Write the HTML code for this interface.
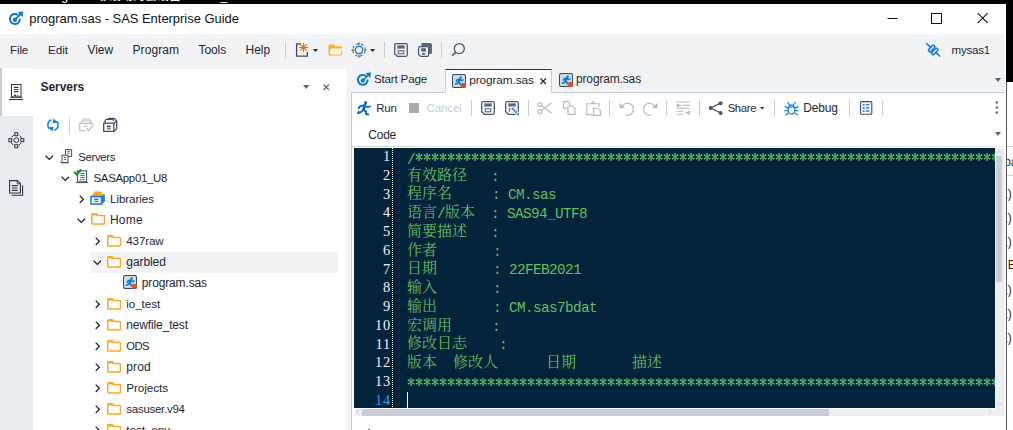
<!DOCTYPE html>
<html lang="en"><head><meta charset="utf-8"><title>program.sas - SAS Enterprise Guide</title>
<style>
html,body{margin:0;padding:0;}
body{width:1013px;height:430px;overflow:hidden;position:relative;background:#fff;font-family:"Liberation Sans", sans-serif;font-size:12px;color:#1f2633;}
.a{position:absolute;}
.t{position:absolute;white-space:pre;line-height:16px;height:16px;}
svg{position:absolute;overflow:visible;}
.code{position:absolute;left:407px;white-space:pre;color:#68bd64;font-family:"Liberation Mono","Noto Serif CJK SC",monospace;font-size:14.4px;letter-spacing:-0.64px;line-height:18.75px;height:18.75px;margin-top:0.8px;}
.code b{font-weight:400;letter-spacing:0;position:relative;top:-1px;font-family:"Liberation Mono","Noto Serif CJK SC",monospace;font-size:15px;line-height:18.75px;}
.code i{font-style:normal;letter-spacing:0;position:relative;top:-1px;color:#74cc6c;font-family:"IPAGothic","Liberation Mono",monospace;font-size:16px;line-height:18.75px;}
.ln{position:absolute;left:356px;margin-top:-1px;width:35px;text-align:right;color:#e6e8ea;font-family:"Liberation Serif",serif;font-weight:400;font-size:14.4px;letter-spacing:0.8px;line-height:18.75px;height:18.75px;}

</style></head><body>
<div class="a" style="left:0;top:0;width:1013px;height:4px;background:#000"></div>
<div class="a" style="left:1006px;top:0;width:7px;height:82px;background:#000"></div>
<div class="a" style="left:0;top:0;width:1006px;height:4px;overflow:hidden;color:#fff;font-family:'Liberation Sans','Noto Sans CJK SC',sans-serif;font-size:12px;line-height:14px;white-space:pre">
<span class="a" style="left:61px;top:-11px;font-size:13px">g</span>
<span class="a" style="left:97px;top:-11px;font-weight:700">非活动的会话窗</span>
<span class="a" style="left:220.5px;top:-11px">_</span>
</div>
<div class="a" style="left:0;top:4px;width:1006px;height:30px;background:#fff"></div>
<div class="a" style="left:0;top:34px;width:1005px;height:35px;background:#f2f3f5"></div>
<div class="a" style="left:0;top:68px;width:33px;height:362px;background:#e8ebef"></div>
<div class="a" style="left:0;top:68px;width:33px;height:48px;background:#fff"></div>
<div class="a" style="left:0;top:68px;width:2px;height:48px;background:#c8cdd7"></div>
<div class="a" style="left:346px;top:68px;width:6px;height:362px;background:#f2f3f5"></div>
<div class="a" style="left:352px;top:68px;width:653px;height:24px;background:#f2f3f5"></div>
<div class="a" style="left:351px;top:92px;width:654px;height:1px;background:#c9cdd6"></div>
<div class="a" style="left:351px;top:92px;width:1px;height:338px;background:#c9cdd6"></div>
<div class="a" style="left:445px;top:69px;width:107px;height:24px;background:#fff;border-left:1px solid #c9cdd6;border-right:1px solid #c9cdd6;border-top:1px solid #2b3240;box-sizing:border-box"></div>
<div class="a" style="left:1006px;top:82px;width:1px;height:348px;background:#5a5a5a"></div>
<div class="a" style="left:1007px;top:146px;width:6px;height:1px;background:#d0d0d0"></div>
<div class="a" style="left:1007px;top:175px;width:6px;height:1px;background:#d0d0d0"></div>
<div class="a" style="left:1007px;top:82px;width:6px;height:348px;overflow:hidden;font-size:12px;line-height:14px;color:#2a2a33;white-space:pre">
<span class="a" style="right:-4.5px;top:73px">pa</span>
<span class="a" style="right:1.2px;top:104.6px">E)</span>
<span class="a" style="right:1.2px;top:128.6px">E)</span>
<span class="a" style="right:1.2px;top:152.6px">E)</span>
<span class="a" style="right:1.2px;top:200.6px">E)</span>
<span class="a" style="right:1.2px;top:224.6px">E)</span>
<span class="a" style="right:1.2px;top:248.6px">E)</span>
<span class="a" style="left:0.8px;top:176.4px;color:#3a1c10">Ex</span>
</div>
<div class="a" style="left:89.5px;top:252.4px;width:248.5px;height:20.4px;background:#f2f3f5"></div>
<div class="a" style="left:354px;top:148px;width:641px;height:260px;background:#03233a;overflow:hidden"></div>
<div class="a" style="left:352px;top:146px;width:653px;height:1px;background:#e6e8ec"></div>
<div class="a" style="left:352px;top:146px;width:60px;height:1px;background:#cfd3da"></div>
<div class="a" style="left:392px;top:148px;width:1px;height:260px;background:repeating-linear-gradient(to bottom,#fff 0 1px,transparent 1px 2px)"></div>
<div class="a" style="left:0;top:0;width:995px;height:408px;overflow:hidden">
<div class="ln" style="top:148.00px;color:#f4f4f4">1</div>
<div class="code" style="top:148.00px">/<i>********************************************************************************</i></div>
<div class="ln" style="top:166.75px;color:#f4f4f4">2</div>
<div class="code" style="top:166.75px"><b>有效路径</b>   :</div>
<div class="ln" style="top:185.50px;color:#f4f4f4">3</div>
<div class="code" style="top:185.50px"><b>程序名</b>     : CM.sas</div>
<div class="ln" style="top:204.25px;color:#f4f4f4">4</div>
<div class="code" style="top:204.25px"><b>语言</b>/<b>版本</b>  : SAS94_UTF8</div>
<div class="ln" style="top:223.00px;color:#f4f4f4">5</div>
<div class="code" style="top:223.00px"><b>简要描述</b>   :</div>
<div class="ln" style="top:241.75px;color:#f4f4f4">6</div>
<div class="code" style="top:241.75px"><b>作者</b>       :</div>
<div class="ln" style="top:260.50px;color:#f4f4f4">7</div>
<div class="code" style="top:260.50px"><b>日期</b>       : 22FEB2021</div>
<div class="ln" style="top:279.25px;color:#f4f4f4">8</div>
<div class="code" style="top:279.25px"><b>输入</b>       :</div>
<div class="ln" style="top:298.00px;color:#f4f4f4">9</div>
<div class="code" style="top:298.00px"><b>输出</b>       : CM.sas7bdat</div>
<div class="ln" style="top:316.75px;color:#f4f4f4">10</div>
<div class="code" style="top:316.75px"><b>宏调用</b>     :</div>
<div class="ln" style="top:335.50px;color:#f4f4f4">11</div>
<div class="code" style="top:335.50px"><b>修改日志</b>    :</div>
<div class="ln" style="top:354.25px;color:#f4f4f4">12</div>
<div class="code" style="top:354.25px"><b>版本</b>  <b>修改人</b>      <b>日期</b>       <b>描述</b></div>
<div class="ln" style="top:373.00px;color:#f4f4f4">13</div>
<div class="code" style="top:373.00px"><i>*********************************************************************************</i></div>
<div class="ln" style="top:391.75px;color:#3b9bf5">14</div>
</div>
<div class="a" style="left:407px;top:391.5px;width:1px;height:16.5px;background:#fff"></div>
<div class="a" style="left:354px;top:409px;width:641px;height:7px;background:#eeeff2"></div>
<div class="a" style="left:362px;top:409px;width:467px;height:7px;background:#c9cdd6"></div>
<div class="a" style="left:995px;top:148px;width:9.5px;height:268px;background:#eeeff2"></div>
<div class="a" style="left:995.5px;top:156px;width:6.5px;height:126px;background:#c9cdd6"></div>
<svg style="left:354px;top:409px" width="8" height="7"><path d="M5.5 1 L2.5 3.5 L5.5 6" fill="none" stroke="#cdd1d8" stroke-width="1"/></svg>
<svg style="left:986px;top:409px" width="8" height="7"><path d="M2.5 1 L5.5 3.5 L2.5 6" fill="none" stroke="#cdd1d8" stroke-width="1"/></svg>
<svg style="left:996px;top:148px" width="7" height="8"><path d="M1 5.5 L3.5 2.5 L6 5.5" fill="none" stroke="#cdd1d8" stroke-width="1"/></svg>
<svg style="left:996px;top:400px" width="7" height="8"><path d="M1 2.5 L3.5 5.5 L6 2.5" fill="none" stroke="#cdd1d8" stroke-width="1"/></svg>
<div class="a" style="left:368px;top:429px;width:2px;height:1px;background:#8a4a3a"></div>
<div class="t" style="left:29.30px;top:10.50px;font-size:13px;font-weight:400;color:#111;letter-spacing:-0.041px">program.sas - SAS Enterprise Guide</div>
<div class="t" style="left:10.00px;top:41.96px;font-size:11.65px;font-weight:400;color:#1f2633;letter-spacing:-0.143px">File</div>
<div class="t" style="left:48.10px;top:41.93px;font-size:11.74px;font-weight:400;color:#1f2633;letter-spacing:-0.111px">Edit</div>
<div class="t" style="left:87.50px;top:41.84px;font-size:12px;font-weight:400;color:#1f2633;letter-spacing:-0.049px">View</div>
<div class="t" style="left:132.50px;top:41.84px;font-size:12px;font-weight:400;color:#1f2633;letter-spacing:0.083px">Program</div>
<div class="t" style="left:198.50px;top:41.84px;font-size:12px;font-weight:400;color:#1f2633;letter-spacing:-0.083px">Tools</div>
<div class="t" style="left:245.50px;top:41.84px;font-size:12px;font-weight:400;color:#1f2633;letter-spacing:-0.022px">Help</div>
<div class="t" style="left:951.50px;top:41.98px;font-size:11.6px;font-weight:400;color:#1f2633;letter-spacing:-0.229px">mysas1</div>
<div class="t" style="left:40.50px;top:78.84px;font-size:12px;font-weight:700;color:#1f2633;letter-spacing:-0.064px">Servers</div>
<div class="t" style="left:373.90px;top:70.97px;font-size:11.63px;font-weight:400;color:#1f2633;letter-spacing:-0.175px">Start Page</div>
<div class="t" style="left:469.20px;top:71.90px;font-size:11.82px;font-weight:400;color:#1f2633;letter-spacing:-0.091px">program.sas</div>
<div class="t" style="left:576.00px;top:70.84px;font-size:12px;font-weight:400;color:#1f2633;letter-spacing:-0.155px">program.sas</div>
<div class="t" style="left:376.30px;top:100.00px;font-size:11.53px;font-weight:400;color:#1f2633;letter-spacing:-0.286px">Run</div>
<div class="t" style="left:426.50px;top:99.96px;font-size:11.65px;font-weight:400;color:#c3cad6;letter-spacing:-0.180px">Cancel</div>
<div class="t" style="left:727.70px;top:100.08px;font-size:11.32px;font-weight:400;color:#1f2633;letter-spacing:-0.363px">Share</div>
<div class="t" style="left:803.20px;top:99.84px;font-size:12px;font-weight:400;color:#1f2633;letter-spacing:-0.135px">Debug</div>
<div class="t" style="left:368.20px;top:126.84px;font-size:12px;font-weight:400;color:#1f2633;letter-spacing:-0.197px">Code</div>
<div class="t" style="left:78.20px;top:149.06px;font-size:11.36px;font-weight:400;color:#1f2633;letter-spacing:-0.317px">Servers</div>
<div class="t" style="left:93.50px;top:170.03px;font-size:11.47px;font-weight:400;color:#1f2633;letter-spacing:-0.324px">SASApp01_U8</div>
<div class="t" style="left:110.00px;top:190.94px;font-size:11.72px;font-weight:400;color:#1f2633;letter-spacing:-0.118px">Libraries</div>
<div class="t" style="left:110.00px;top:211.84px;font-size:12px;font-weight:400;color:#1f2633;letter-spacing:0.196px">Home</div>
<div class="t" style="left:126.30px;top:232.95px;font-size:11.69px;font-weight:400;color:#1f2633;letter-spacing:-0.172px">437raw</div>
<div class="t" style="left:126.30px;top:253.84px;font-size:12px;font-weight:400;color:#1f2633;letter-spacing:-0.076px">garbled</div>
<div class="t" style="left:141.80px;top:274.84px;font-size:12px;font-weight:400;color:#1f2633;letter-spacing:-0.146px">program.sas</div>
<div class="t" style="left:126.30px;top:295.93px;font-size:11.74px;font-weight:400;color:#1f2633;letter-spacing:-0.111px">io_test</div>
<div class="t" style="left:126.30px;top:316.84px;font-size:12px;font-weight:400;color:#1f2633;letter-spacing:-0.148px">newfile_test</div>
<div class="t" style="left:126.30px;top:338.10px;font-size:11.26px;font-weight:400;color:#1f2633;letter-spacing:-0.536px">ODS</div>
<div class="t" style="left:126.30px;top:358.84px;font-size:12px;font-weight:400;color:#1f2633;letter-spacing:0.117px">prod</div>
<div class="t" style="left:126.30px;top:379.92px;font-size:11.78px;font-weight:400;color:#1f2633;letter-spacing:-0.097px">Projects</div>
<div class="t" style="left:126.30px;top:401.02px;font-size:11.48px;font-weight:400;color:#1f2633;letter-spacing:-0.252px">sasuser.v94</div>
<div class="t" style="left:126.30px;top:421.91px;font-size:11.79px;font-weight:400;color:#1f2633;letter-spacing:-0.098px">test_env</div>
<svg style="left:9px;top:11.7px" width="15" height="14" viewBox="0 0 15 14"><g transform="scale(1.0)" fill="none" stroke="#0a7ac8" stroke-width="2" stroke-linecap="butt"><path d="M9.2 3.2 A5 5 0 1 0 10.9 6.6"/><path d="M6 7.6 L12.2 1.6" stroke-width="1.8"/></g><g transform="scale(1.0)" fill="#0a7ac8"><circle cx="5.9" cy="7.7" r="2.2"/><path d="M8.6 0 L14.2 -0.4 L13.6 5.2 Z"/></g></svg>
<svg style="left:357px;top:72.7px" width="15" height="14" viewBox="0 0 15 14"><g transform="scale(0.98)" fill="none" stroke="#0a7ac8" stroke-width="2" stroke-linecap="butt"><path d="M9.2 3.2 A5 5 0 1 0 10.9 6.6"/><path d="M6 7.6 L12.2 1.6" stroke-width="1.8"/></g><g transform="scale(0.98)" fill="#0a7ac8"><circle cx="5.9" cy="7.7" r="2.2"/><path d="M8.6 0 L14.2 -0.4 L13.6 5.2 Z"/></g></svg>
<svg style="left:887px;top:13px" width="12" height="12" viewBox="0 0 12 12"><path d="M0.5 5.5 H10.5" stroke="#111" stroke-width="1" fill="none"/></svg>
<svg style="left:931px;top:13px" width="12" height="12" viewBox="0 0 12 12"><rect x="0.5" y="0.5" width="10" height="10" stroke="#111" stroke-width="1" fill="none"/></svg>
<svg style="left:977px;top:13px" width="12" height="12" viewBox="0 0 12 12"><path d="M0.7 0.2 L10.7 10.2 M10.7 0.2 L0.7 10.2" stroke="#111" stroke-width="1.1" fill="none"/></svg>
<div class="a" style="left:285.0px;top:42px;width:1px;height:16px;background:#c9cdd6"></div>
<div class="a" style="left:383.9px;top:42px;width:1px;height:16px;background:#c9cdd6"></div>
<div class="a" style="left:440.9px;top:42px;width:1px;height:16px;background:#c9cdd6"></div>
<svg style="left:295px;top:42px" width="14" height="16" viewBox="0 0 14 16"><path d="M6 1.8 H1.6 V14.2 H12.4 V10" fill="none" stroke="#3f4b63" stroke-width="1.3"/><g stroke="#e2701c" stroke-width="1.2" fill="none"><path d="M8.5 1 V10 M4 5.5 H13 M5.3 2.3 L11.7 8.7 M11.7 2.3 L5.3 8.7"/></g></svg>
<svg style="left:312.6px;top:49px" width="5" height="3" viewBox="0 0 5 3"><path d="M0 0 H5 L2.5 3 Z" fill="#2a2f3a"/></svg>
<svg style="left:369.6px;top:49px" width="5" height="3" viewBox="0 0 5 3"><path d="M0 0 H5 L2.5 3 Z" fill="#2a2f3a"/></svg>
<svg style="left:328px;top:44px" width="15" height="12" viewBox="0 0 15 12"><path d="M0.5 1.6 Q0.5 0.5 1.6 0.5 H5.6 L7 2.2 H13 Q14 2.2 14 3.2 V10.6 Q14 11.5 13 11.5 H1.5 Q0.5 11.5 0.5 10.6 Z" fill="#fbb02e"/><path d="M2.6 4.4 H14.2 L12.6 10.4 H2 Z" fill="#fff8ea"/></svg>
<svg style="left:351px;top:42px" width="16" height="16" viewBox="0 0 16 16"><circle cx="8" cy="8" r="3.7" fill="none" stroke="#1f7fd6" stroke-width="1.5"/><circle cx="8" cy="8" r="6.2" fill="none" stroke="#1f7fd6" stroke-width="1.2" stroke-dasharray="2.4 2.47" stroke-dashoffset="-1.25"/><g fill="#e2651c"><rect x="7" y="0.6" width="2" height="2"/><rect x="7" y="13.4" width="2" height="2"/><rect x="0.6" y="7" width="2" height="2"/><rect x="13.4" y="7" width="2" height="2"/></g></svg>
<svg style="left:394px;top:43px" width="14" height="14" viewBox="0 0 14 14"><path d="M2.2 0.7 H11.8 Q13.3 0.7 13.3 2.2 V11.8 Q13.3 13.3 11.8 13.3 H3.4 L0.7 10.8 V2.2 Q0.7 0.7 2.2 0.7 Z" fill="none" stroke="#4a566e" stroke-width="1.3"/><rect x="3.3" y="2.4" width="7.4" height="3.2" fill="#5b6781"/><rect x="4.2" y="7.8" width="5.6" height="3" fill="none" stroke="#4a566e" stroke-width="1"/></svg>
<svg style="left:418px;top:43px" width="15" height="14" viewBox="0 0 15 14"><path d="M3.4 0 H12 Q14 0 14 2 V9.4 Q14 11 12.4 11 H11 V3.2 H3.4 Z" fill="#5b6781"/><path d="M1.9 3.6 H9.3 Q10.6 3.6 10.6 4.9 V12.1 Q10.6 13.4 9.3 13.4 H2.6 L0.6 11.4 V4.9 Q0.6 3.6 1.9 3.6 Z" fill="#f2f3f5" stroke="#4a566e" stroke-width="1.2"/><rect x="3.2" y="5.2" width="4.8" height="3.4" fill="#5b6781"/><rect x="4" y="10" width="3.2" height="1.8" fill="#5b6781"/></svg>
<svg style="left:451px;top:42px" width="15" height="15" viewBox="0 0 15 15"><circle cx="8.3" cy="6.6" r="5" fill="none" stroke="#4a566e" stroke-width="1.3"/><path d="M4.6 10.4 L1.2 13.8" stroke="#4a566e" stroke-width="1.6" fill="none"/></svg>
<svg style="left:926px;top:43px" width="15" height="14" viewBox="0 0 15 14"><g transform="translate(7.2,6.9) rotate(43.8)" fill="#f2f3f5" stroke="#0f78d4" stroke-width="1.5"><path d="M-9.6 0 H-3.6 M3.6 0 H9.6" fill="none" stroke-width="1.6"/><rect x="-3.5" y="-3.8" width="2.8" height="7.6" rx="0.8"/><rect x="0.7" y="-3.8" width="2.8" height="7.6" rx="0.8"/></g></svg>
<svg style="left:995px;top:77.5px" width="6" height="4" viewBox="0 0 6 4"><path d="M0 0 H6 L3.0 4 Z" fill="#5a6478"/></svg>
<svg style="left:995px;top:132.2px" width="6" height="4" viewBox="0 0 6 4"><path d="M0 0 H6 L3.0 4 Z" fill="#5a6478"/></svg>
<svg style="left:995px;top:100px" width="4" height="15" viewBox="0 0 4 15"><g fill="#5a6478"><circle cx="1.8" cy="2.4" r="1.25"/><circle cx="1.8" cy="7.5" r="1.25"/><circle cx="1.8" cy="12.5" r="1.25"/></g></svg>
<svg style="left:8px;top:83px" width="18" height="18" viewBox="0 0 18 18"><g fill="none" stroke="#2b3544" stroke-width="1"><rect x="3.5" y="1.5" width="9.5" height="12.5"/><path d="M1 16.5 H15.2" stroke-width="1.1"/><path d="M2.4 14.2 H14.2"/><path d="M6 4.4 H10.5 M6 6.5 H10.5 M6 8.6 H10.5" stroke-width="1.1"/><path d="M6 12.4 H8.2 M9.4 12.4 H10.4" stroke-width="1.3"/></g></svg>
<svg style="left:8px;top:132px" width="17" height="17" viewBox="0 0 17 17"><g fill="none" stroke="#2b3544" stroke-width="1"><circle cx="8.3" cy="8.2" r="2.4"/><circle cx="8.3" cy="8.2" r="5.6" stroke-dasharray="3.4 5.4" stroke-dashoffset="-2.7"/></g><g fill="#e8ebef" stroke="#2b3544" stroke-width="1"><rect x="6.8" y="0.7" width="3" height="3"/><rect x="6.8" y="12.7" width="3" height="3"/><rect x="0.8" y="6.7" width="3" height="3"/><rect x="12.8" y="6.7" width="3" height="3"/></g></svg>
<svg style="left:9px;top:180px" width="15" height="17" viewBox="0 0 15 17"><g fill="none" stroke="#2b3544" stroke-width="1.1"><path d="M0.6 0.6 H8.4 L11.4 3.6 V13 H0.6 Z"/><path d="M8.2 0.8 V3.8 H11.2" stroke-width="0.9"/><path d="M2.8 5.6 H8.6 M2.8 8 H8.6 M2.8 10.4 H8.6"/><path d="M13.6 5.4 V15.2 H2.6" /></g></svg>
<svg style="left:302.8px;top:84.8px" width="6.4" height="4" viewBox="0 0 6.4 4"><path d="M0 0 H6.4 L3.2 4 Z" fill="#5a6478"/></svg>
<svg style="left:323px;top:84px" width="7" height="7" viewBox="0 0 7 7"><path d="M0.5 0.5 L6 6 M6 0.5 L0.5 6" stroke="#5a6478" stroke-width="1.1" fill="none"/></svg>
<svg style="left:46px;top:118px" width="14" height="14" viewBox="0 0 14 14"><g fill="none" stroke="#1f86e0" stroke-width="1.7"><path d="M5.6 1.8 A5.4 5.4 0 0 0 3.2 10.6"/><path d="M8.4 12.2 A5.4 5.4 0 0 0 10.8 3.4"/></g><g fill="#1f86e0"><path d="M1.4 9.3 L7.5 8.7 L6.8 13.4 Z"/><path d="M12.6 4.7 L6.5 5.3 L7.2 0.6 Z"/></g></svg>
<div class="a" style="left:69.0px;top:117px;width:1px;height:16px;background:#c9cdd6"></div>
<svg style="left:79px;top:118px" width="15" height="14" viewBox="0 0 15 14"><g fill="none" stroke="#b9bdc6" stroke-width="1.1"><path d="M3 3.2 L4.4 1 H10 L11.4 3.2"/><path d="M1.6 5 L3 3 H11.6 L13 5"/><path d="M6.5 12.6 H0.7 V5.4 H13.3 V6.6"/><path d="M4.6 8.2 H8.4"/><path d="M7.4 10.2 L9.6 12.8 L14 6.8" stroke-width="1.3"/></g></svg>
<svg style="left:103px;top:118px" width="15" height="14" viewBox="0 0 15 14"><g fill="none" stroke="#3f4b63" stroke-width="1.25"><path d="M2 5 V3.2 Q2 1.4 4 1.4 H8.6 Q10.4 1.4 11 2.8"/><path d="M4.8 1.4 Q5.4 0.4 6.8 0.4 H10.6 Q12.4 0.4 13.2 2.6"/><rect x="0.7" y="5.2" width="10.2" height="8.2"/><path d="M10.9 5.2 L13.7 2.8 V10.8 L10.9 13.4"/></g><rect x="3.9" y="7.6" width="3.8" height="1.7" fill="#3f4b63"/><rect x="3.9" y="10.3" width="3.8" height="1.1" fill="#3f4b63"/></svg>
<svg style="left:45px;top:155.0px" width="9" height="6" viewBox="0 0 9 6"><path d="M0.6 0.7 L4.3 4.4 L8 0.7" fill="none" stroke="#222" stroke-width="1.25"/></svg>
<svg style="left:60px;top:149px" width="13" height="15" viewBox="0 0 13 15"><g fill="none" stroke="#3f4b63" stroke-width="1"><path d="M5.5 6 V0.6 H11.6 V7.6 H8.2"/><rect x="2" y="6.2" width="6" height="7.4" fill="#fff"/><path d="M0.4 13.7 H8.4"/><path d="M7.4 2.4 H9.8 M7.4 4.2 H9.8 M3.8 8.4 H6.2 M3.8 10.4 H6.2" stroke-width="0.9"/></g></svg>
<svg style="left:61px;top:176.0px" width="9" height="6" viewBox="0 0 9 6"><path d="M0.6 0.7 L4.3 4.4 L8 0.7" fill="none" stroke="#222" stroke-width="1.25"/></svg>
<svg style="left:74px;top:169px" width="15" height="15" viewBox="0 0 15 15"><g fill="none" stroke="#3f4b63" stroke-width="1"><rect x="3.4" y="1.8" width="9.2" height="11" fill="#fff"/><path d="M2 13.6 H14"/><path d="M6.4 4.4 H10.6 M6.4 6.4 H10.6 M6.4 8.4 H10.6" stroke-width="0.9"/><path d="M5.6 10.8 H7.6 M8.6 10.8 H10.6" stroke-width="1.1"/></g><path d="M0.2 2.8 L2.7 5.4 L7.4 0.4" fill="none" stroke="#16961a" stroke-width="2.2"/></svg>
<svg style="left:79px;top:195.20000000000002px" width="6" height="9" viewBox="0 0 6 9"><path d="M0.7 0.6 L4.4 4.3 L0.7 8" fill="none" stroke="#222" stroke-width="1.25"/></svg>
<svg style="left:90px;top:191px" width="16" height="14" viewBox="0 0 16 14"><path d="M3 3 L4.6 0.6 H10.6 L12.8 2.2 L11.2 3 Z" fill="#f7a823"/><path d="M1.2 5.4 L3 2.8 H11.6 L14.6 3.2 L12 5.6 Z" fill="#f7a823"/><rect x="1" y="5.6" width="10.6" height="7.4" fill="#fff" stroke="#1f7fe0" stroke-width="1.6"/><path d="M11.8 5.6 L14.4 3.4 V10.6 L11.8 13" fill="#1f7fe0" stroke="#1f7fe0" stroke-width="0.8"/><path d="M4.2 8.2 H8.4 M4.2 10.4 H8.4" stroke="#1f7fe0" stroke-width="1.4"/></svg>
<svg style="left:77.4px;top:218.0px" width="9" height="6" viewBox="0 0 9 6"><path d="M0.6 0.7 L4.3 4.4 L8 0.7" fill="none" stroke="#222" stroke-width="1.25"/></svg>
<svg style="left:90.7px;top:213px" width="15" height="12" viewBox="0 0 15 12"><path d="M0.75 2.2 V10 Q0.75 10.9 1.65 10.9 H12.6 Q13.5 10.9 13.5 10 V3.4 Q13.5 2.5 12.6 2.5 H6.6 L5.4 0.75 H1.65 Q0.75 0.75 0.75 1.65 Z" fill="#fff" stroke="#f9a825" stroke-width="1.5"/><path d="M0.75 1.4 Q0.75 0.4 1.7 0.4 H5.4 L6.8 2.5 H0.75 Z" fill="#f9a825"/></svg>
<svg style="left:95px;top:237.20000000000002px" width="6" height="9" viewBox="0 0 6 9"><path d="M0.7 0.6 L4.4 4.3 L0.7 8" fill="none" stroke="#222" stroke-width="1.25"/></svg>
<svg style="left:106.9px;top:234.6px" width="15" height="12" viewBox="0 0 15 12"><path d="M0.75 2.2 V10 Q0.75 10.9 1.65 10.9 H12.6 Q13.5 10.9 13.5 10 V3.4 Q13.5 2.5 12.6 2.5 H6.6 L5.4 0.75 H1.65 Q0.75 0.75 0.75 1.65 Z" fill="#fff" stroke="#f9a825" stroke-width="1.5"/><path d="M0.75 1.4 Q0.75 0.4 1.7 0.4 H5.4 L6.8 2.5 H0.75 Z" fill="#f9a825"/></svg>
<svg style="left:93.4px;top:260.0px" width="9" height="6" viewBox="0 0 9 6"><path d="M0.6 0.7 L4.3 4.4 L8 0.7" fill="none" stroke="#222" stroke-width="1.25"/></svg>
<svg style="left:106.9px;top:255.6px" width="15" height="12" viewBox="0 0 15 12"><path d="M0.75 2.2 V10 Q0.75 10.9 1.65 10.9 H12.6 Q13.5 10.9 13.5 10 V3.4 Q13.5 2.5 12.6 2.5 H6.6 L5.4 0.75 H1.65 Q0.75 0.75 0.75 1.65 Z" fill="#fff" stroke="#f9a825" stroke-width="1.5"/><path d="M0.75 1.4 Q0.75 0.4 1.7 0.4 H5.4 L6.8 2.5 H0.75 Z" fill="#f9a825"/></svg>
<svg style="left:122.9px;top:275px" width="16" height="16" viewBox="0 0 16 16"><rect x="0.6" y="0.6" width="12.8" height="12.8" rx="1.3" fill="#fff" stroke="#3f4b63" stroke-width="1.2"/><rect x="2.2" y="2.2" width="9.6" height="9.4" fill="#bcd9f3"/><g fill="none" stroke="#0f74c6" stroke-width="1.5" stroke-linecap="round" stroke-linejoin="round"><path d="M7.9 5 L6.4 8.2" stroke-width="2"/><path d="M7.4 5.4 L5.2 5.8 L4.4 7.2"/><path d="M8 5.6 L9.8 6.6 L11 5.9"/><path d="M6.4 8.4 L4.9 9.8 L3.2 10.2"/><path d="M6.6 8.4 L8.2 9.3 L8 10.9"/></g><ellipse cx="8.7" cy="3.5" rx="1" ry="1.2" fill="#0f74c6"/><circle cx="11.5" cy="11.4" r="2.6" fill="#e0501e"/></svg>
<svg style="left:95px;top:300.2px" width="6" height="9" viewBox="0 0 6 9"><path d="M0.7 0.6 L4.4 4.3 L0.7 8" fill="none" stroke="#222" stroke-width="1.25"/></svg>
<svg style="left:106.9px;top:297.7px" width="15" height="12" viewBox="0 0 15 12"><path d="M0.75 2.2 V10 Q0.75 10.9 1.65 10.9 H12.6 Q13.5 10.9 13.5 10 V3.4 Q13.5 2.5 12.6 2.5 H6.6 L5.4 0.75 H1.65 Q0.75 0.75 0.75 1.65 Z" fill="#fff" stroke="#f9a825" stroke-width="1.5"/><path d="M0.75 1.4 Q0.75 0.4 1.7 0.4 H5.4 L6.8 2.5 H0.75 Z" fill="#f9a825"/></svg>
<svg style="left:95px;top:321.2px" width="6" height="9" viewBox="0 0 6 9"><path d="M0.7 0.6 L4.4 4.3 L0.7 8" fill="none" stroke="#222" stroke-width="1.25"/></svg>
<svg style="left:106.9px;top:318.7px" width="15" height="12" viewBox="0 0 15 12"><path d="M0.75 2.2 V10 Q0.75 10.9 1.65 10.9 H12.6 Q13.5 10.9 13.5 10 V3.4 Q13.5 2.5 12.6 2.5 H6.6 L5.4 0.75 H1.65 Q0.75 0.75 0.75 1.65 Z" fill="#fff" stroke="#f9a825" stroke-width="1.5"/><path d="M0.75 1.4 Q0.75 0.4 1.7 0.4 H5.4 L6.8 2.5 H0.75 Z" fill="#f9a825"/></svg>
<svg style="left:95px;top:342.2px" width="6" height="9" viewBox="0 0 6 9"><path d="M0.7 0.6 L4.4 4.3 L0.7 8" fill="none" stroke="#222" stroke-width="1.25"/></svg>
<svg style="left:106.9px;top:339.7px" width="15" height="12" viewBox="0 0 15 12"><path d="M0.75 2.2 V10 Q0.75 10.9 1.65 10.9 H12.6 Q13.5 10.9 13.5 10 V3.4 Q13.5 2.5 12.6 2.5 H6.6 L5.4 0.75 H1.65 Q0.75 0.75 0.75 1.65 Z" fill="#fff" stroke="#f9a825" stroke-width="1.5"/><path d="M0.75 1.4 Q0.75 0.4 1.7 0.4 H5.4 L6.8 2.5 H0.75 Z" fill="#f9a825"/></svg>
<svg style="left:95px;top:363.2px" width="6" height="9" viewBox="0 0 6 9"><path d="M0.7 0.6 L4.4 4.3 L0.7 8" fill="none" stroke="#222" stroke-width="1.25"/></svg>
<svg style="left:106.9px;top:360.7px" width="15" height="12" viewBox="0 0 15 12"><path d="M0.75 2.2 V10 Q0.75 10.9 1.65 10.9 H12.6 Q13.5 10.9 13.5 10 V3.4 Q13.5 2.5 12.6 2.5 H6.6 L5.4 0.75 H1.65 Q0.75 0.75 0.75 1.65 Z" fill="#fff" stroke="#f9a825" stroke-width="1.5"/><path d="M0.75 1.4 Q0.75 0.4 1.7 0.4 H5.4 L6.8 2.5 H0.75 Z" fill="#f9a825"/></svg>
<svg style="left:95px;top:384.2px" width="6" height="9" viewBox="0 0 6 9"><path d="M0.7 0.6 L4.4 4.3 L0.7 8" fill="none" stroke="#222" stroke-width="1.25"/></svg>
<svg style="left:106.9px;top:381.7px" width="15" height="12" viewBox="0 0 15 12"><path d="M0.75 2.2 V10 Q0.75 10.9 1.65 10.9 H12.6 Q13.5 10.9 13.5 10 V3.4 Q13.5 2.5 12.6 2.5 H6.6 L5.4 0.75 H1.65 Q0.75 0.75 0.75 1.65 Z" fill="#fff" stroke="#f9a825" stroke-width="1.5"/><path d="M0.75 1.4 Q0.75 0.4 1.7 0.4 H5.4 L6.8 2.5 H0.75 Z" fill="#f9a825"/></svg>
<svg style="left:95px;top:405.2px" width="6" height="9" viewBox="0 0 6 9"><path d="M0.7 0.6 L4.4 4.3 L0.7 8" fill="none" stroke="#222" stroke-width="1.25"/></svg>
<svg style="left:106.9px;top:402.7px" width="15" height="12" viewBox="0 0 15 12"><path d="M0.75 2.2 V10 Q0.75 10.9 1.65 10.9 H12.6 Q13.5 10.9 13.5 10 V3.4 Q13.5 2.5 12.6 2.5 H6.6 L5.4 0.75 H1.65 Q0.75 0.75 0.75 1.65 Z" fill="#fff" stroke="#f9a825" stroke-width="1.5"/><path d="M0.75 1.4 Q0.75 0.4 1.7 0.4 H5.4 L6.8 2.5 H0.75 Z" fill="#f9a825"/></svg>
<svg style="left:95px;top:426.2px" width="6" height="9" viewBox="0 0 6 9"><path d="M0.7 0.6 L4.4 4.3 L0.7 8" fill="none" stroke="#222" stroke-width="1.25"/></svg>
<svg style="left:106.9px;top:423.7px" width="15" height="12" viewBox="0 0 15 12"><path d="M0.75 2.2 V10 Q0.75 10.9 1.65 10.9 H12.6 Q13.5 10.9 13.5 10 V3.4 Q13.5 2.5 12.6 2.5 H6.6 L5.4 0.75 H1.65 Q0.75 0.75 0.75 1.65 Z" fill="#fff" stroke="#f9a825" stroke-width="1.5"/><path d="M0.75 1.4 Q0.75 0.4 1.7 0.4 H5.4 L6.8 2.5 H0.75 Z" fill="#f9a825"/></svg>
<svg style="left:452.1px;top:74.1px" width="16" height="16" viewBox="0 0 16 16"><rect x="0.6" y="0.6" width="12.8" height="12.8" rx="1.3" fill="#fff" stroke="#3f4b63" stroke-width="1.2"/><rect x="2.2" y="2.2" width="9.6" height="9.4" fill="#bcd9f3"/><g fill="none" stroke="#0f74c6" stroke-width="1.5" stroke-linecap="round" stroke-linejoin="round"><path d="M7.9 5 L6.4 8.2" stroke-width="2"/><path d="M7.4 5.4 L5.2 5.8 L4.4 7.2"/><path d="M8 5.6 L9.8 6.6 L11 5.9"/><path d="M6.4 8.4 L4.9 9.8 L3.2 10.2"/><path d="M6.6 8.4 L8.2 9.3 L8 10.9"/></g><ellipse cx="8.7" cy="3.5" rx="1" ry="1.2" fill="#0f74c6"/><circle cx="11.5" cy="11.4" r="2.6" fill="#e0501e"/></svg>
<svg style="left:558.9px;top:73.1px" width="16" height="16" viewBox="0 0 16 16"><rect x="0.6" y="0.6" width="12.8" height="12.8" rx="1.3" fill="#fff" stroke="#3f4b63" stroke-width="1.2"/><rect x="2.2" y="2.2" width="9.6" height="9.4" fill="#bcd9f3"/><g fill="none" stroke="#0f74c6" stroke-width="1.5" stroke-linecap="round" stroke-linejoin="round"><path d="M7.9 5 L6.4 8.2" stroke-width="2"/><path d="M7.4 5.4 L5.2 5.8 L4.4 7.2"/><path d="M8 5.6 L9.8 6.6 L11 5.9"/><path d="M6.4 8.4 L4.9 9.8 L3.2 10.2"/><path d="M6.6 8.4 L8.2 9.3 L8 10.9"/></g><ellipse cx="8.7" cy="3.5" rx="1" ry="1.2" fill="#0f74c6"/><circle cx="11.5" cy="11.4" r="2.6" fill="#e0501e"/></svg>
<svg style="left:539.9px;top:78.2px" width="7" height="7" viewBox="0 0 7 7"><path d="M0.5 0.5 L6 6 M6 0.5 L0.5 6" stroke="#222" stroke-width="1.1" fill="none"/></svg>
<svg style="left:357px;top:101px" width="15" height="15" viewBox="0 0 15 15"><g fill="none" stroke="#0f70c4" stroke-width="2" stroke-linecap="round" stroke-linejoin="round"><path d="M7.9 3.8 L6.6 8.6" stroke-width="3"/><path d="M6.6 4.5 L2.9 5.2 L1.8 7.3" stroke-width="1.9"/><path d="M8.2 5.2 L11 6.3 L13.2 5.3" stroke-width="1.7"/><path d="M6.2 9 L3.6 11.4 L1 12.2 L1.8 10.8" stroke-width="2"/><path d="M7 9 L9 10.6 L9 13.1 L11.2 13.4" stroke-width="2"/></g><ellipse cx="8.7" cy="1.8" rx="1.5" ry="1.8" fill="#0f70c4"/></svg>
<div class="a" style="left:409px;top:103px;width:10px;height:10px;background:#ababab"></div>
<div class="a" style="left:471.0px;top:100px;width:1px;height:16px;background:#c9cdd6"></div>
<div class="a" style="left:528.0px;top:100px;width:1px;height:16px;background:#c9cdd6"></div>
<div class="a" style="left:608.7px;top:100px;width:1px;height:16px;background:#c9cdd6"></div>
<div class="a" style="left:665.8px;top:100px;width:1px;height:16px;background:#c9cdd6"></div>
<div class="a" style="left:698.8px;top:100px;width:1px;height:16px;background:#c9cdd6"></div>
<div class="a" style="left:773.9px;top:100px;width:1px;height:16px;background:#c9cdd6"></div>
<div class="a" style="left:849.0px;top:100px;width:1px;height:16px;background:#c9cdd6"></div>
<div class="a" style="left:881.7px;top:100px;width:1px;height:16px;background:#c9cdd6"></div>
<svg style="left:481px;top:100.7px" width="14" height="14" viewBox="0 0 14 14"><path d="M2.2 0.7 H11.8 Q13.3 0.7 13.3 2.2 V11.8 Q13.3 13.3 11.8 13.3 H3.4 L0.7 10.8 V2.2 Q0.7 0.7 2.2 0.7 Z" fill="none" stroke="#4a566e" stroke-width="1.3"/><rect x="3.3" y="2.4" width="7.4" height="3.2" fill="#5b6781"/><rect x="4.2" y="7.8" width="5.6" height="3" fill="none" stroke="#4a566e" stroke-width="1"/></svg>
<svg style="left:504.8px;top:100.7px" width="14" height="14" viewBox="0 0 14 14"><path d="M2.2 0.7 H11.8 Q13.3 0.7 13.3 2.2 V11.8 Q13.3 13.3 11.8 13.3 H3.4 L0.7 10.8 V2.2 Q0.7 0.7 2.2 0.7 Z" fill="none" stroke="#4a566e" stroke-width="1.3"/><rect x="3.3" y="2.4" width="7.4" height="3.2" fill="#5b6781"/><path d="M4.4 10.6 V7.6 H6.4" fill="none" stroke="#4a566e" stroke-width="1"/><path d="M6.6 6.6 L12.6 12.6" stroke="#fff" stroke-width="4"/><path d="M7.2 7.2 L12 12" stroke="#1f7fe0" stroke-width="2.6" stroke-dasharray="1.6 0.7"/><circle cx="13" cy="13.2" r="1" fill="#1f7fe0"/></svg>
<svg style="left:537px;top:101px" width="16" height="14" viewBox="0 0 16 14"><g fill="none" stroke="#b4b9c3" stroke-width="1.1"><circle cx="3" cy="3.6" r="2"/><circle cx="3" cy="10.6" r="2"/><path d="M4.6 4.8 L14.6 12.2 M4.6 9.4 L14.6 1.8"/></g></svg>
<svg style="left:563px;top:101px" width="13" height="14" viewBox="0 0 13 14"><g fill="none" stroke="#b4b9c3" stroke-width="1.1"><path d="M4.6 7.4 H0.6 V0.6 H5 L7 2.6 V4.4"/><path d="M5 5 H9.6 L12 7.4 V13.4 H5 Z"/></g></svg>
<svg style="left:585.5px;top:100.5px" width="15" height="15" viewBox="0 0 15 15"><g fill="none" stroke="#b4b9c3" stroke-width="1.1"><path d="M7.4 13.6 H0.8 V2.8 H3.6 M10.4 2.8 H13.2 V6"/><path d="M4.4 2.6 H9.6 M5.8 1 H8.2" stroke-width="1.3"/><path d="M7.6 7.2 H12 L14.4 9.6 V14.4 H7.6 Z"/></g></svg>
<svg style="left:618.5px;top:101.5px" width="15" height="14" viewBox="0 0 15 14"><path d="M3.2 4.4 A6 6 0 1 1 6.4 12.8" fill="none" stroke="#b4b9c3" stroke-width="1.2"/><path d="M0.4 1 L0.8 6.4 L6 5.6 Z" fill="#b4b9c3"/></svg>
<svg style="left:642.5px;top:101.5px" width="15" height="14" viewBox="0 0 15 14"><path d="M11.8 4.4 A6 6 0 1 0 8.6 12.8" fill="none" stroke="#b4b9c3" stroke-width="1.2"/><path d="M14.6 1 L14.2 6.4 L9 5.6 Z" fill="#b4b9c3"/></svg>
<svg style="left:675.5px;top:100.5px" width="15" height="15" viewBox="0 0 15 15"><g stroke="#b4b9c3" stroke-width="1.1" fill="none"><path d="M0.4 1 H14.4 M7 4.2 H14.4 M0.4 7.2 H14.4 M0.4 10.2 H7.4 M0.4 13.2 H7.4"/></g><g fill="#b4b9c3"><path d="M0.6 2.4 L5.6 4.4 L0.6 6.4 Z"/><path d="M14 9.4 L9 11.7 L14 14 Z"/></g></svg>
<svg style="left:708px;top:101px" width="15" height="14" viewBox="0 0 15 14"><g fill="#4a566e"><circle cx="2.7" cy="7" r="2"/><circle cx="12.6" cy="2.2" r="2"/><circle cx="12.6" cy="12" r="2"/></g><path d="M12.6 2.2 L2.7 7 L12.6 12" fill="none" stroke="#4a566e" stroke-width="1.3"/></svg>
<svg style="left:760px;top:107px" width="4.4" height="2.6" viewBox="0 0 4.4 2.6"><path d="M0 0 H4.4 L2.2 2.6 Z" fill="#2a2f3a"/></svg>
<svg style="left:783.5px;top:100.5px" width="15" height="15" viewBox="0 0 15 15"><g fill="none" stroke="#1f7fe0" stroke-width="1.3"><ellipse cx="7.5" cy="8.6" rx="3.4" ry="4.6"/><path d="M4.6 6 H10.4"/><path d="M5.6 4.2 L3.4 1 M9.4 4.2 L11.6 1"/><path d="M4.2 7.4 L0.8 5.4 M10.8 7.4 L14.2 5.4 M4 9.6 H0.4 M11 9.6 H14.6 M4.4 11.8 L1.2 14.2 M10.6 11.8 L13.8 14.2"/></g></svg>
<svg style="left:860px;top:101px" width="13" height="14" viewBox="0 0 13 14"><rect x="0.6" y="0.6" width="11.2" height="12.6" rx="1" fill="#fff" stroke="#3b4a63" stroke-width="1.1"/><g fill="#1f7fe0"><rect x="2.8" y="2.8" width="1.8" height="1.8"/><rect x="2.8" y="6" width="1.8" height="1.8"/><rect x="2.8" y="9.2" width="1.8" height="1.8"/><rect x="5.8" y="3" width="3.6" height="1.4"/><rect x="5.8" y="6.2" width="3.6" height="1.4"/><rect x="5.8" y="9.4" width="3.6" height="1.4"/></g></svg>
</body></html>
